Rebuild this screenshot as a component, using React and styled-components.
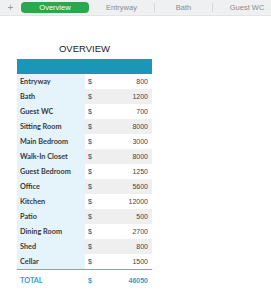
import React from 'react';
import styled, { createGlobalStyle } from 'styled-components';

const GlobalStyle = createGlobalStyle`
  body {
    margin: 0;
    background: #ffffff;
    font-family: 'Liberation Sans', Arial, sans-serif;
  }
`;

const TabBar = styled.div`
  display: flex;
  align-items: center;
  height: 15px;
  background: #eef0f1;
  border-bottom: 1px solid #e2e4e5;
  overflow: hidden;
  white-space: nowrap;
`;

const AddTab = styled.div`
  width: 21px;
  flex-shrink: 0;
  text-align: center;
  color: #9a9a9a;
  font-size: 10px;
  font-weight: 300;
  line-height: 15px;
`;

const Tab = styled.div`
  flex-shrink: 0;
  width: ${p => p.w}px;
  height: ${p => (p.active ? 11 : 9)}px;
  line-height: ${p => (p.active ? 11 : 9)}px;
  text-align: center;
  font-size: 7.5px;
  color: ${p => (p.active ? '#ffffff' : '#8c8c8c')};
  background: ${p => (p.active ? '#2aa84f' : 'transparent')};
  border-radius: ${p => (p.active ? 4 : 0)}px;
  border-left: ${p => (p.sep ? '1px solid #d6d8d9' : 'none')};
`;

const Sheet = styled.div`
  padding-left: 17px;
  width: 135px;
`;

const Title = styled.div`
  margin-top: 27px;
  height: 16px;
  line-height: 12px;
  text-align: center;
  font-family: 'Liberation Sans', Arial, sans-serif;
  font-size: 9.5px;
  color: #222;
`;

const HeaderBar = styled.div`
  height: 15px;
  background: #1996b8;
`;

const Row = styled.div`
  display: grid;
  grid-template-columns: 68px 1fr;
  height: ${p => (p.total ? 20 : 15)}px;
  border-top: ${p => (p.total ? '1px solid #5ab4d8' : 'none')};
`;

const Label = styled.div`
  background: ${p => (p.total ? '#ffffff' : '#e5f4fa')};
  padding-left: 3px;
  display: flex;
  align-items: center;
  font-family: Lato, 'Noto Sans', sans-serif;
  font-weight: 700;
  font-size: 7.3px;
  color: ${p => (p.total ? '#2d9fd0' : '#3a3a3a')};
`;

const Amount = styled.div`
  display: flex;
  align-items: center;
  justify-content: space-between;
  padding: 0 4px 0 3px;
  background: ${p => (p.shade ? '#efefef' : '#ffffff')};
  font-size: 7px;
  color: ${p => (p.total ? '#2d9fd0' : '#444')};
  font-weight: ${p => (p.total ? 700 : 400)};
`;

const rooms = [
  ['Entryway', 800],
  ['Bath', 1200],
  ['Guest WC', 700],
  ['Sitting Room', 8000],
  ['Main Bedroom', 3000],
  ['Walk-In Closet', 8000],
  ['Guest Bedroom', 1250],
  ['Office', 5600],
  ['Kitchen', 12000],
  ['Patio', 500],
  ['Dining Room', 2700],
  ['Shed', 800],
  ['Cellar', 1500],
];

export default function App() {
  const total = rooms.reduce((s, r) => s + r[1], 0);
  return (
    <>
      <GlobalStyle />
      <TabBar>
        <AddTab>+</AddTab>
        <Tab active w={68}>Overview</Tab>
        <Tab w={65}>Entryway</Tab>
        <Tab sep w={57}>Bath</Tab>
        <Tab sep w={68}>Guest WC</Tab>
      </TabBar>
      <Sheet>
        <Title>OVERVIEW</Title>
        <HeaderBar />
        {rooms.map(([name, value], i) => (
          <Row key={name}>
            <Label>{name}</Label>
            <Amount shade={i % 2 === 1}>
              <span>$</span>
              <span>{value}</span>
            </Amount>
          </Row>
        ))}
        <Row total>
          <Label total>TOTAL</Label>
          <Amount total>
            <span>$</span>
            <span>{total}</span>
          </Amount>
        </Row>
      </Sheet>
    </>
  );
}
